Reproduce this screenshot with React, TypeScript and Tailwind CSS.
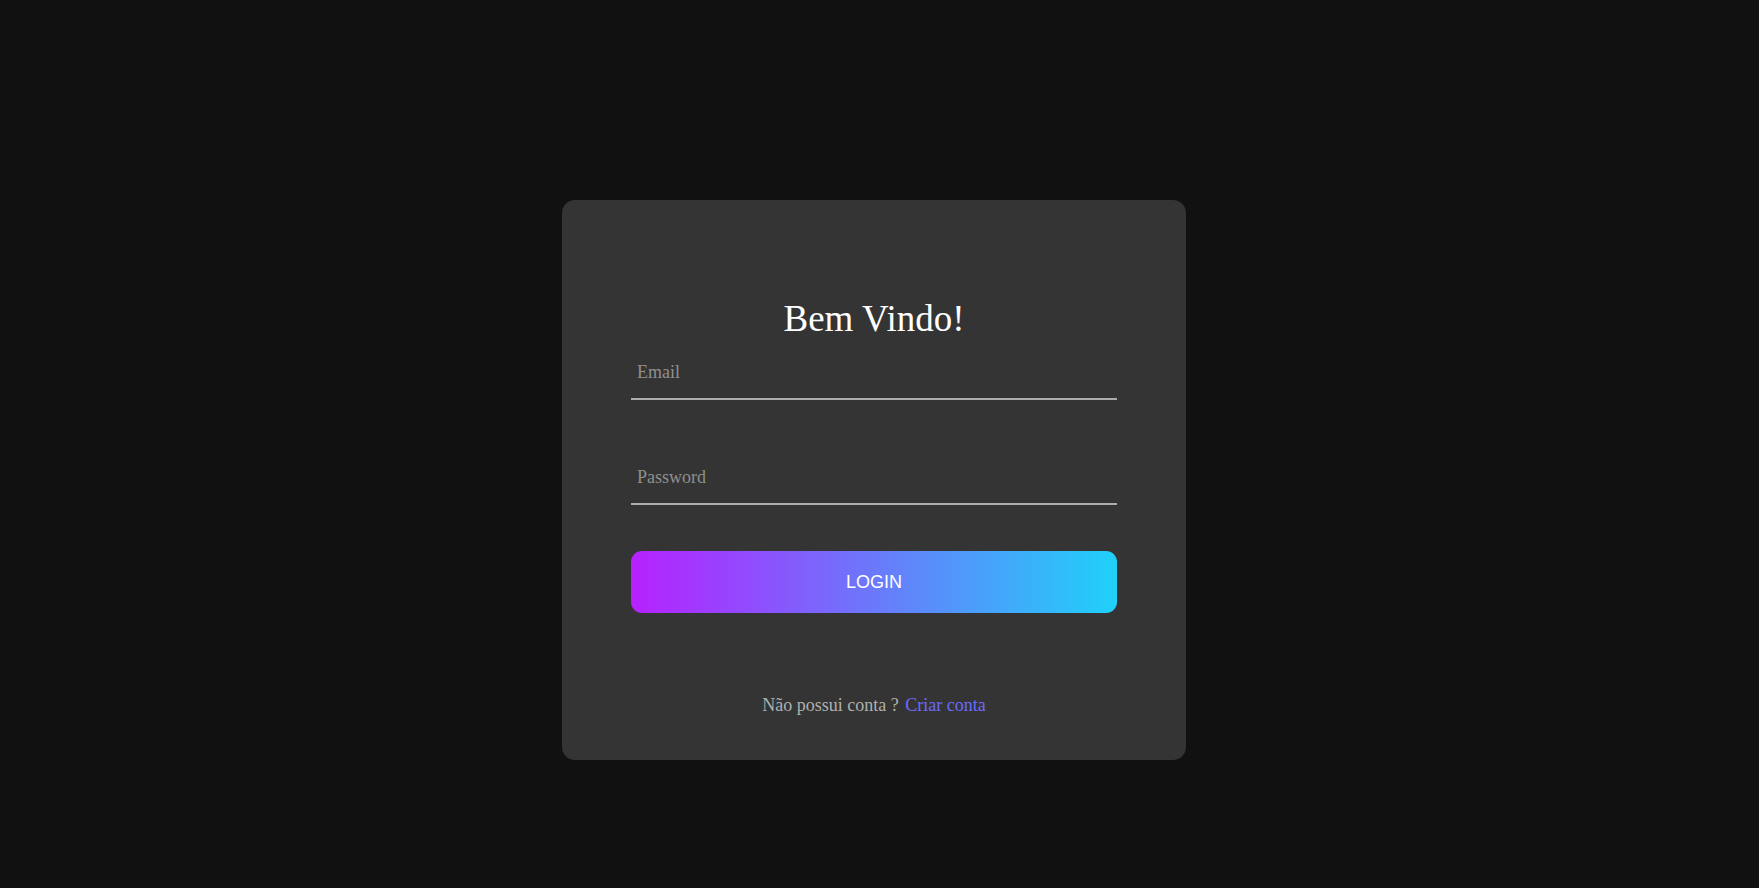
import { useState } from 'react';

export default function App() {
  const [email, setEmail] = useState('');
  const [password, setPassword] = useState('');

  return (
    <div className="min-h-screen w-full bg-[#111111] flex justify-center items-start pt-[200px] pr-[11px] font-['Liberation_Serif',serif]">
      <div className="w-[624px] rounded-[13px] bg-[#343434] px-[69px] pt-[99px] pb-[44px]">
        <h1 className="text-center text-[37px] leading-[40px] text-white">Bem Vindo!</h1>

        <form className="flex flex-col" onSubmit={(e) => e.preventDefault()}>
          {/* Email */}
          <input
            type="email"
            value={email}
            onChange={(e) => setEmail(e.target.value)}
            placeholder="Email"
            className="mt-[10px] block h-[51px] w-full bg-transparent pl-[6px] pb-[3px] text-[18px] text-white placeholder:text-[#8f8f8f] outline-none border-b-2 border-[#acacac]"
          />

          {/* Password */}
          <input
            type="password"
            value={password}
            onChange={(e) => setPassword(e.target.value)}
            placeholder="Password"
            className="mt-[54px] block h-[51px] w-full bg-transparent pl-[6px] pb-[3px] text-[18px] text-white placeholder:text-[#8f8f8f] outline-none border-b-2 border-[#acacac]"
          />

          <button
            type="submit"
            className="mt-[46px] h-[62px] w-full rounded-[11px] bg-[linear-gradient(to_right,#b621fe,#1fd1f9)] font-['Liberation_Sans',sans-serif] text-[18px] text-white"
          >
            LOGIN
          </button>
        </form>

        <p className="mt-[82px] text-center text-[18px] leading-[21px] text-[#b0b0b0]">
          Não possui conta ? <a href="#" className="ml-[2px] text-[#6b6bff]">Criar conta</a>
        </p>
      </div>
    </div>
  );
}
